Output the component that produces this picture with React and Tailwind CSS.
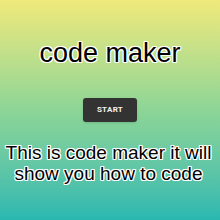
export default function App() {
  const outline =
    "[text-shadow:1px_0_0_#fff,-1px_0_0_#fff,0_1px_0_#fff,0_-1px_0_#fff,1px_1px_0_#fff,-1px_-1px_0_#fff,1px_-1px_0_#fff,-1px_1px_0_#fff]";
  return (
    <div className="w-[220px] h-[220px] flex flex-col items-center bg-gradient-to-b from-[#efe97a] via-[#8cd596] to-[#27b8b1] font-['Liberation_Sans',Arial,sans-serif] text-black">
      <h1 className={`mt-[37px] text-[27px] leading-[32px] ${outline}`}>code maker</h1>
      <button className="mt-[29px] w-[54px] h-[24px] rounded-[3px] bg-[#333333] text-[#f2f2f2] text-[8px] font-bold font-['Roboto',sans-serif] tracking-[0.3px] shadow-sm">
        START
      </button>
      <p className={`mt-[20px] -ml-[3px] text-[19px] leading-[21px] text-center ${outline}`}>
        This is code maker it will show you how to code
      </p>
    </div>
  );
}
